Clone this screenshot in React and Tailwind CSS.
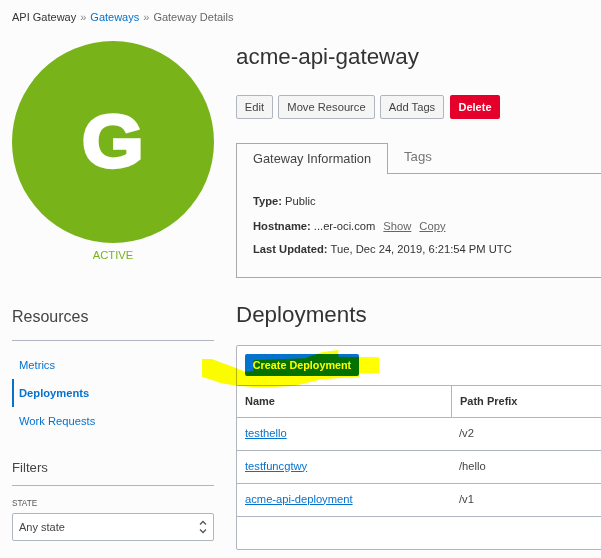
const RESOURCES = [
  { label: "Metrics" },
  { label: "Deployments", active: true },
  { label: "Work Requests" },
];

const ROWS = [
  { name: "testhello", prefix: "/v2" },
  { name: "testfuncgtwy", prefix: "/hello" },
  { name: "acme-api-deployment", prefix: "/v1" },
];

function ActionButton({ width, children }) {
  return (
    <button className={`h-6 rounded-[2px] border border-[#b0b5c0] bg-[#f5f5f6] text-[11.2px] text-[#444] ${width}`}>
      {children}
    </button>
  );
}

function Field({ label, children }) {
  return (
    <div className="flex h-4 items-center text-[11.2px] text-[#333]">
      <span className="mr-[3px] font-bold">{label}</span>
      {children}
    </div>
  );
}

// the hand-drawn marker stroke over the create button
function Highlight() {
  return (
    <svg
      className="pointer-events-none absolute top-[345px] left-[195px] mix-blend-multiply"
      width="195"
      height="50"
      viewBox="0 0 585 150"
      aria-hidden="true"
    >
      <path
        d="M21 42 L50 42 L125 70 L150 80 L175 78 L175 45 L330 40 L380 22 L430 15 L430 35 L552 37 L552 85 L492 85 L492 95 L380 103 L300 122 L200 128 L125 122 L80 115 L21 95 Z"
        fill="#ffff00"
      />
    </svg>
  );
}

export default function App() {
  return (
    <div className="relative h-[558px] w-[601px] overflow-hidden bg-[#fcfcfd] font-['Liberation_Sans',Arial,sans-serif] text-[#333]">
      <div className="flex h-[41px] items-start pt-[10px] pl-3 text-[11px] leading-[14px] text-[#666]">
        <span className="text-[#333]">API Gateway</span>
        <span className="mx-1 text-[#888]">»</span>
        <span className="text-[#0572ce]">Gateways</span>
        <span className="mx-1 text-[#888]">»</span>
        <span>Gateway Details</span>
      </div>

      <div className="flex pl-3">
        <aside className="w-[202px] shrink-0">
          <div className="flex h-[202px] w-[202px] items-center justify-center rounded-full bg-[#78b31a]">
            <span className="scale-x-[1.07] text-[74px] leading-none font-bold text-white [-webkit-text-stroke:3.5px_white]">
              G
            </span>
          </div>
          <p className="mt-[5px] text-center text-[11.2px] leading-[14px] text-[#78b31a]">ACTIVE</p>

          <h2 className="mt-[45px] border-b border-[#b0b5c0] pb-[13px] text-[16px] leading-[20px] text-[#444]">
            Resources
          </h2>
          <nav className="mt-[10px] flex flex-col">
            {RESOURCES.map((item) => (
              <a
                key={item.label}
                className={`flex h-[28px] items-center text-[11.2px] text-[#0572ce] ${
                  item.active ? "border-l-2 border-[#0572ce] pl-[5px] font-bold" : "pl-[7px]"
                }`}
              >
                {item.label}
              </a>
            ))}
          </nav>

          <h2 className="mt-[23px] border-b border-[#b0b5c0] pb-[7px] text-[13.2px] leading-[20px] text-[#444]">
            Filters
          </h2>
          <p className="mt-[12px] text-[8.2px] leading-[12px] text-[#555]">STATE</p>
          <div className="mt-[3px] flex h-[28px] items-center justify-between rounded-[2px] border border-[#b0b5c0] bg-white pr-[5px] pl-[6px] text-[11px] text-[#444]">
            Any state
            <svg width="10" height="16" viewBox="0 0 10 16" fill="none" stroke="#555" strokeWidth="1.3">
              <path d="M2 5.5 L5 2.5 L8 5.5" />
              <path d="M2 10.5 L5 13.5 L8 10.5" />
            </svg>
          </div>
        </aside>

        <main className="ml-[22px] w-[420px] shrink-0">
          <h1 className="mt-px h-[30px] text-[22.4px] leading-[30px] text-[#333]">acme-api-gateway</h1>

          <div className="mt-[23px] flex gap-[5px]">
            <ActionButton width="w-[37px]">Edit</ActionButton>
            <ActionButton width="w-[97px]">Move Resource</ActionButton>
            <ActionButton width="w-[64px]">Add Tags</ActionButton>
            <button className="ml-px h-6 w-[50px] rounded-[2px] bg-[#e4002b] text-[11px] font-bold text-white">
              Delete
            </button>
          </div>

          <div className="mt-[24px] flex h-[31px]">
            <div className="h-[31px] w-[152px] border-x border-t border-[#a9a9a9] bg-[#fcfcfd] pt-[7px] pl-4 text-[12.8px] leading-[16px] text-[#444]">
              Gateway Information
            </div>
            <div className="flex-1 border-b border-[#a9a9a9] pt-[6px] pl-4 text-[13.2px] leading-[16px] text-[#777]">
              Tags
            </div>
          </div>
          <div className="h-[104px] border-b border-l border-[#a9a9a9] pt-[19px] pl-4">
            <Field label="Type:">Public</Field>
            <div className="mt-[9px]">
              <Field label="Hostname:">
                ...er-oci.com
                <span className="ml-2 text-[#666] underline">Show</span>
                <span className="ml-2 text-[#666] underline">Copy</span>
              </Field>
            </div>
            <div className="mt-[7px]">
              <Field label="Last Updated:">Tue, Dec 24, 2019, 6:21:54 PM UTC</Field>
            </div>
          </div>

          <h2 className="mt-[22px] h-[30px] text-[22.4px] leading-[30px] text-[#333]">Deployments</h2>

          <div className="mt-[15px] h-[205px] rounded-[2px] border border-[#b0b5c0] bg-white">
            <div className="flex h-[40px] items-start border-b border-[#b0b5c0] pt-2 pl-2">
              <button className="h-[22px] w-[114px] rounded-[2px] bg-[#0572ce] text-[10.8px] font-bold text-white">
                Create Deployment
              </button>
            </div>
            <div className="flex h-[32px] border-b border-[#b0b5c0] text-[11px] font-bold text-[#333]">
              <div className="flex w-[215px] items-center border-r border-[#b0b5c0] pl-2">Name</div>
              <div className="flex items-center pl-2">Path Prefix</div>
            </div>
            {ROWS.map((row) => (
              <div key={row.name} className="flex h-[33px] items-center border-b border-[#b0b5c0] pb-[2px] text-[11.2px]">
                <a className="w-[215px] pl-2 text-[#0572ce] underline">{row.name}</a>
                <span className="pl-[7px] text-[#444]">{row.prefix}</span>
              </div>
            ))}
          </div>
        </main>
      </div>

      <Highlight />
    </div>
  );
}
